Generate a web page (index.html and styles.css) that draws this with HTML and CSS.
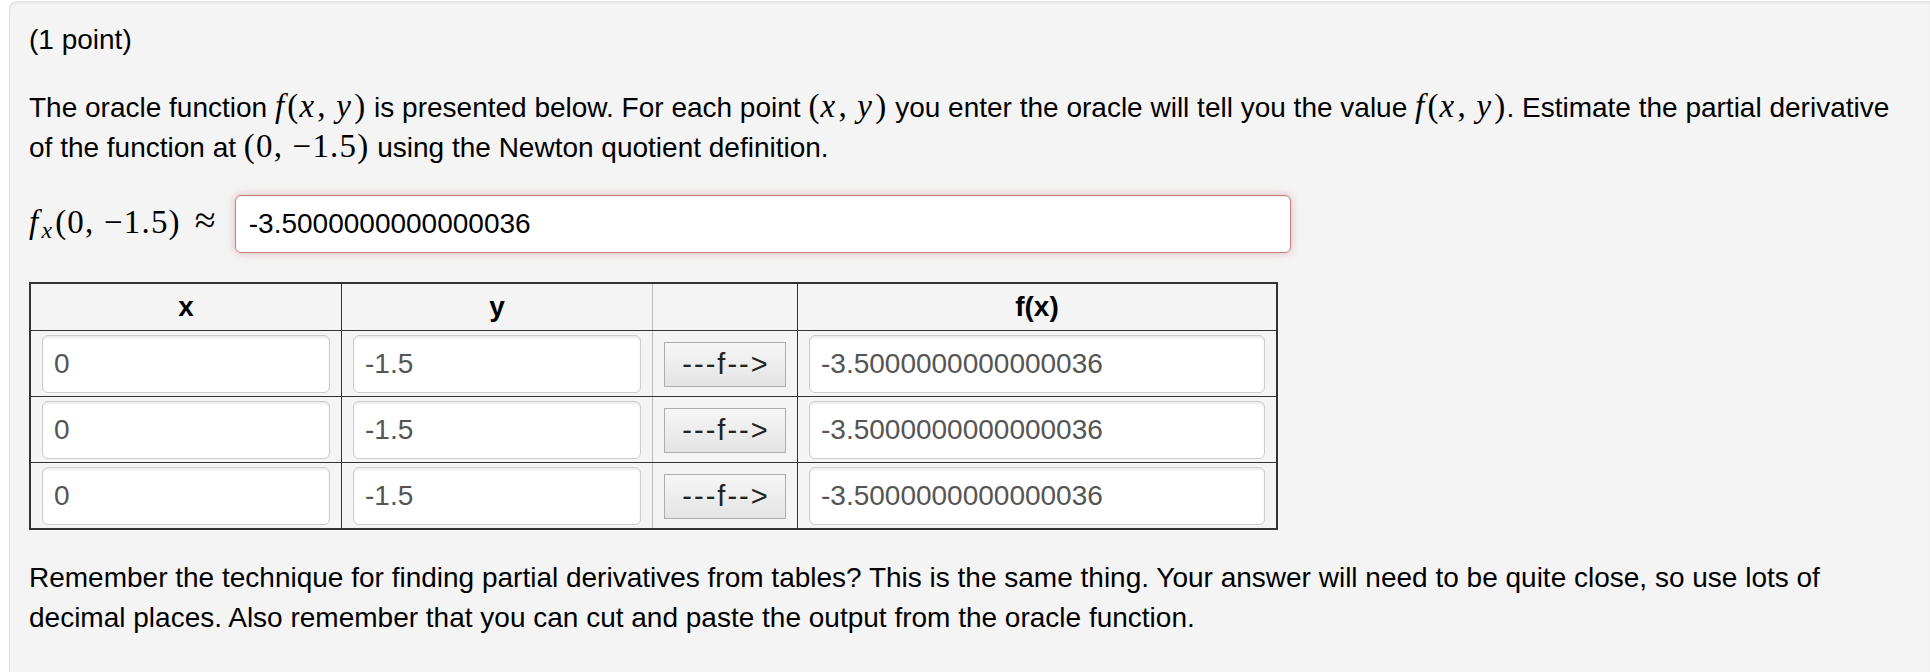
FILE: index.html
```html
<!DOCTYPE html>
<html lang="en">
<head>
<meta charset="utf-8">
<title>Oracle function</title>
<link rel="stylesheet" href="styles.css">
</head>
<body>
<div class="problem">
  <p class="points">(1 point)</p>
  <p class="intro">The oracle function <span class="m"><i>f</i>(<i>x</i>, <i>y</i>)</span> is presented below. For each point <span class="m">(<i>x</i>, <i>y</i>)</span> you enter the oracle will tell you the value <span class="m"><i>f</i>(<i>x</i>, <i>y</i>)</span>. Estimate the partial derivative of the function at <span class="m">(0, −1.5)</span> using the Newton quotient definition.</p>
  <div class="answer">
    <span class="m"><i>f</i><sub><i>x</i></sub>(0, −1.5)<span class="approx">≈</span></span>
    <input class="ans" type="text" value="-3.5000000000000036">
  </div>
  <table class="oracle">
    <thead>
      <tr>
        <th>x</th>
        <th class="ycol">y</th>
        <th class="bcol"></th>
        <th>f(x)</th>
      </tr>
    </thead>
    <tbody>
      <tr>
        <td><input class="cell-in" type="text" value="0"></td>
        <td class="ycol"><input class="cell-in" type="text" value="-1.5"></td>
        <td class="bcol"><button class="fbtn" type="button">---f--&gt;</button></td>
        <td><input class="cell-in wide" type="text" value="-3.5000000000000036"></td>
      </tr>
      <tr>
        <td><input class="cell-in" type="text" value="0"></td>
        <td class="ycol"><input class="cell-in" type="text" value="-1.5"></td>
        <td class="bcol"><button class="fbtn" type="button">---f--&gt;</button></td>
        <td><input class="cell-in wide" type="text" value="-3.5000000000000036"></td>
      </tr>
      <tr>
        <td><input class="cell-in" type="text" value="0"></td>
        <td class="ycol"><input class="cell-in" type="text" value="-1.5"></td>
        <td class="bcol"><button class="fbtn" type="button">---f--&gt;</button></td>
        <td><input class="cell-in wide" type="text" value="-3.5000000000000036"></td>
      </tr>
    </tbody>
  </table>
  <p class="note">Remember the technique for finding partial derivatives from tables? This is the same thing. Your answer will need to be quite close, so use lots of decimal places. Also remember that you can cut and paste the output from the oracle function.</p>
</div>
</body>
</html>
```

FILE: styles.css
```css
html, body {
  margin: 0;
  padding: 0;
  background: #ffffff;
  overflow: hidden;
}

.problem {
  margin: 1px 0 0 9px;
  background: #f4f4f4;
  border: 1px solid #e1e1e1;
  border-right: 0;
  border-bottom: 0;
  border-radius: 8px 0 0 0;
  box-shadow: inset 0 2px 2px rgba(0, 0, 0, 0.04);
  padding: 18px 30px 80px 19px;
  font-family: "Liberation Sans", Arial, Helvetica, sans-serif;
  font-size: 28px;
  line-height: 40px;
  color: #000;
}

.problem p {
  margin: 0;
}

.problem .intro {
  margin-top: 28px;
}

.m {
  font-family: "Liberation Serif", "Times New Roman", serif;
  font-size: 33px;
  line-height: 1;
  letter-spacing: 1.2px;
  white-space: nowrap;
}

.m i {
  font-style: italic;
  padding-right: 2px;
}

.m sub {
  font-size: 0.72em;
  vertical-align: -0.22em;
  line-height: 0;
}

.m .approx {
  display: inline-block;
  margin-left: 14px;
  font-size: 1.15em;
  line-height: 1;
}

.answer {
  display: flex;
  align-items: baseline;
  gap: 18px;
  margin-top: 27px;
}

.ans {
  box-sizing: border-box;
  width: 1056px;
  height: 58px;
  padding: 0 13px;
  border: 1px solid #c9807b;
  border-radius: 6px;
  background: #fff;
  box-shadow: 0 0 8px rgba(185, 74, 72, 0.35), inset 0 1px 1px rgba(0, 0, 0, 0.075);
  font-family: "Liberation Sans", Arial, Helvetica, sans-serif;
  font-size: 28px;
  color: #000;
  outline: none;
}

.oracle {
  margin-top: 29px;
  border-collapse: collapse;
  border: 2px solid #333;
}

.oracle th,
.oracle td {
  border: 1px solid #333;
  padding: 4px 11px 3px 11px;
  vertical-align: middle;
}

.oracle th {
  padding: 3px 11px;
  font-weight: bold;
  text-align: center;
  line-height: 40px;
}

.oracle .ycol {
  border-right-color: #bdbdbd;
}

.oracle .bcol {
  border-left-color: #bdbdbd;
}

.cell-in {
  display: block;
  box-sizing: border-box;
  width: 288px;
  height: 58px;
  padding: 0 11px;
  border: 1px solid #cccccc;
  border-radius: 6px;
  background: #fff;
  box-shadow: inset 0 2px 2px rgba(0, 0, 0, 0.075);
  font-family: "Liberation Sans", Arial, Helvetica, sans-serif;
  font-size: 28px;
  color: #555;
  outline: none;
}

.cell-in.wide {
  width: 456px;
}

.fbtn {
  display: block;
  box-sizing: border-box;
  width: 122px;
  height: 45px;
  margin: 0;
  padding: 0 0 0 2px;
  border: 1px solid #adadad;
  border-radius: 0;
  background: linear-gradient(#f6f6f6, #e4e4e4);
  font-family: "Liberation Sans", Arial, Helvetica, sans-serif;
  font-size: 29px;
  letter-spacing: 2px;
  color: #222;
}

.problem .note {
  margin-top: 28px;
}
```
